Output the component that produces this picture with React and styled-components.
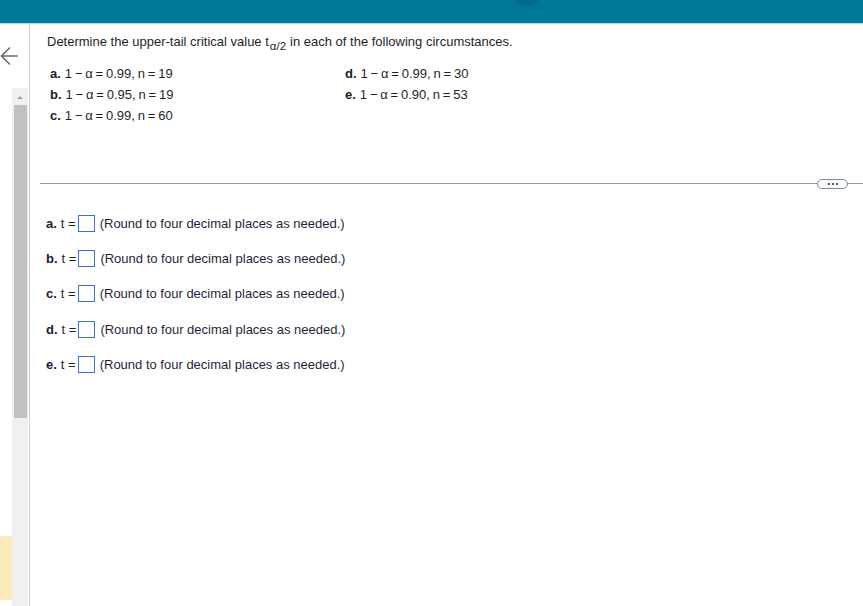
import React from "react";
import styled, { createGlobalStyle } from "styled-components";

const Global = createGlobalStyle`
  html, body { margin: 0; padding: 0; background: #fff; }
  body { font-family: "Liberation Sans", Arial, sans-serif; color: #1f1f1f; overflow: hidden; }
`;

const Page = styled.div`
  width: 863px;
  height: 606px;
  display: flex;
  flex-direction: column;
`;

const TopBar = styled.div`
  height: 23px;
  background: #007899;
  border-bottom: 1px solid #c7d3dd;
  display: flex;
  justify-content: flex-start;
  overflow: hidden;
  flex-shrink: 0;
`;

const Bubble = styled.div`
  width: 28px;
  height: 28px;
  border-radius: 50%;
  background: #006b88;
  margin: -22px 0 0 513px;
`;

const Body = styled.div`
  flex: 1;
  display: flex;
  min-height: 0;
`;

const Side = styled.div`
  width: 29px;
  border-right: 1px solid #cdd0d9;
  display: flex;
  flex-direction: column;
`;

const Back = styled.div`
  height: 22px;
  margin-top: 21px;
  display: flex;
`;

const SideLower = styled.div`
  flex: 1;
  display: flex;
  margin-top: 21px;
`;

const Gutter = styled.div`
  width: 12px;
  display: flex;
  flex-direction: column;
  justify-content: flex-end;
  padding-bottom: 6px;
`;

const Note = styled.div`
  height: 64px;
  background: #f9ebbc;
`;

const Track = styled.div`
  width: 16px;
  background: #f0f0f0;
  display: flex;
  flex-direction: column;
  align-items: center;
`;

const UpArrow = styled.div`
  width: 0;
  height: 0;
  border-left: 3px solid transparent;
  border-right: 3px solid transparent;
  border-bottom: 3px solid #a3a3a3;
  margin-top: 8px;
`;

const Thumb = styled.div`
  width: 13px;
  height: 313px;
  background: #c1c1c1;
  margin-top: 6px;
`;

const Main = styled.div`
  flex: 1;
  display: flex;
  flex-direction: column;
`;

const Question = styled.div`
  padding-left: 17px;
  font-size: 13px;
`;

const Title = styled.div`
  margin-top: 10px;
  line-height: 15px;
`;

const Sub = styled.sub`
  font-size: 11.5px;
  vertical-align: -4px;
  line-height: 0;
  margin: 0 4px 0 1px;
`;

const Parts = styled.div`
  margin-top: 14px;
  display: grid;
  grid-template-columns: 295px auto;
  padding-left: 3px;
`;

const Col = styled.div`
  display: flex;
  flex-direction: column;
`;

const Part = styled.div`
  height: 21px;
  line-height: 21px;
  white-space: nowrap;
  word-spacing: -0.8px;
`;

const Lbl = styled.b`
  font-weight: bold;
  color: #1b1b2b;
  margin-right: 4px;
`;

const Divider = styled.div`
  margin-top: 57px;
  margin-left: 10px;
  height: 1px;
  background: #8d95a6;
  display: flex;
  align-items: center;
  justify-content: flex-end;
  padding-right: 15px;
`;

const More = styled.div`
  width: 29px;
  height: 8px;
  border: 1px solid #7b8698;
  border-radius: 5px;
  background: #fff;
  display: flex;
  align-items: center;
  justify-content: center;
  gap: 2px;
`;

const Dot = styled.span`
  width: 2px;
  height: 2px;
  background: #4f5a6b;
`;

const Answers = styled.div`
  margin-top: 30px;
  padding-left: 16px;
  font-size: 13px;
  display: flex;
  flex-direction: column;
  gap: 17.4px;
`;

const AnswerRow = styled.div`
  display: flex;
  align-items: center;
  height: 18px;
  white-space: nowrap;
`;

const Eq = styled.span`
  margin-right: 2px;
`;

const Box = styled.span`
  width: 15px;
  height: 15px;
  border: 1px solid #3d74c6;
  margin-right: 5px;
  display: inline-block;
`;

const Hint = styled.span`
  color: #1f1f3a;
`;

const ArrowIcon = () => (
  <svg width="19" height="22" viewBox="0 0 19 22">
    <path d="M18 11 H2 M10 2.5 L1.5 11 L10 19.5" stroke="#6b6b6b" strokeWidth="1.6" fill="none" />
  </svg>
);

const left = [
  ["a.", "0.99", "19"],
  ["b.", "0.95", "19"],
  ["c.", "0.99", "60"],
];
const right = [
  ["d.", "0.99", "30"],
  ["e.", "0.90", "53"],
];

const PartText = ({ p }) => (
  <Part>
    <Lbl>{p[0]}</Lbl>1 − α = {p[1]}, n = {p[2]}
  </Part>
);

export default function App() {
  return (
    <Page>
      <Global />
      <TopBar>
        <Bubble />
      </TopBar>
      <Body>
        <Side>
          <Back>
            <ArrowIcon />
          </Back>
          <SideLower>
            <Gutter>
              <Note />
            </Gutter>
            <Track>
              <UpArrow />
              <Thumb />
            </Track>
          </SideLower>
        </Side>
        <Main>
          <Question>
            <Title>
              Determine the upper-tail critical value t<Sub>α/2</Sub>in each of the following circumstances.
            </Title>
            <Parts>
              <Col>
                {left.map((p) => (
                  <PartText key={p[0]} p={p} />
                ))}
              </Col>
              <Col>
                {right.map((p) => (
                  <PartText key={p[0]} p={p} />
                ))}
              </Col>
            </Parts>
          </Question>
          <Divider>
            <More>
              <Dot />
              <Dot />
              <Dot />
            </More>
          </Divider>
          <Answers>
            {["a.", "b.", "c.", "d.", "e."].map((l) => (
              <AnswerRow key={l}>
                <Lbl>{l}</Lbl>
                <Eq>t =</Eq>
                <Box />
                <Hint>(Round to four decimal places as needed.)</Hint>
              </AnswerRow>
            ))}
          </Answers>
        </Main>
      </Body>
    </Page>
  );
}
